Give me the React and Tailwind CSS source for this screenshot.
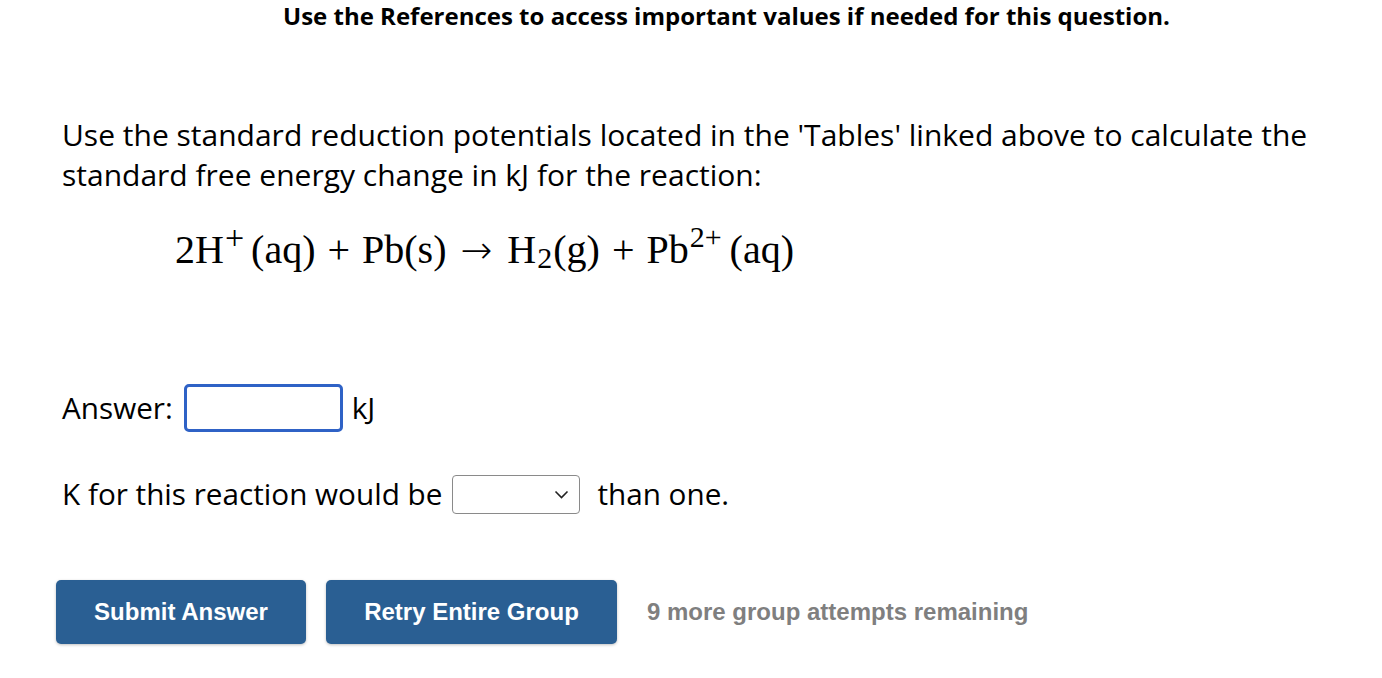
import React from 'react';

export default function App() {
  return (
    <div className="w-[1382px] h-[678px] bg-white text-black font-['Open_Sans',sans-serif] overflow-hidden">
      {/* Header note */}
      <div className="pl-[283px]">
        <p className="text-[24px] font-bold leading-[32px] whitespace-nowrap">
          Use the References to access important values if needed for this question.
        </p>
      </div>

      <div className="pl-[62px]">
        <p className="mt-[83px] text-[30px] leading-[40px] w-[1300px]">
          Use the standard reduction potentials located in the 'Tables' linked above to calculate the standard free energy change in kJ for the reaction:
        </p>

        {/* Equation */}
        <div className="mt-[33px] h-[44px] pl-[113px] flex items-center font-['Liberation_Serif','DejaVu_Serif',serif] text-[40px] leading-[44px] whitespace-nowrap">
          <span>2H</span>
          <span className="ml-[1px] relative -top-[12px] text-[34px] leading-none">+</span>
          <span className="ml-[7px]">(aq)</span>
          <span className="ml-[12px]">+</span>
          <span className="ml-[12px]">Pb(s)</span>
          <span className="ml-[14px] font-['DejaVu_Sans',sans-serif] font-extralight text-[38px]">→</span>
          <span className="ml-[15px]">H</span>
          <span className="ml-[1px] relative top-[8px] text-[30px] leading-none">2</span>
          <span className="ml-[1px]">(g)</span>
          <span className="ml-[12px]">+</span>
          <span className="ml-[12px]">Pb</span>
          <span className="ml-[1px] relative -top-[13px] text-[30px] leading-none">2+</span>
          <span className="ml-[8px]">(aq)</span>
        </div>

        {/* Answer */}
        <div className="mt-[112px] h-[48px] flex items-center text-[29.7px]">
          <span>Answer:</span>
          <div className="ml-[11px] w-[159px] h-[48px] border-[3px] border-[#2f62c6] rounded-[5px]" />
          <span className="ml-[9px]">kJ</span>
        </div>

        {/* K select */}
        <div className="mt-[43px] h-[39px] flex items-center text-[29.7px]">
          <span>K for this reaction would be</span>
          <div className="ml-[10px] w-[128px] h-[39px] border border-[#8a8a8a] rounded-[4px] flex items-center justify-end pr-[10px]">
            <svg width="15" height="9" viewBox="0 0 15 9" fill="none" stroke="#222" strokeWidth="1.6">
              <path d="M1.5 1.5 L7.5 7.5 L13.5 1.5" />
            </svg>
          </div>
          <span className="ml-[17px]">than one.</span>
        </div>
      </div>

      {/* Buttons */}
      <div className="pl-[56px] mt-[66px] flex items-center font-['Liberation_Sans',Arial,sans-serif] text-[24px] font-bold">
        <button className="w-[250px] h-[64px] bg-[#2a5f93] text-white rounded-[5px] shadow-[0_1px_3px_rgba(0,0,0,0.25)]">
          Submit Answer
        </button>
        <button className="ml-[20px] w-[291px] h-[64px] bg-[#2a5f93] text-white rounded-[5px] shadow-[0_1px_3px_rgba(0,0,0,0.25)]">
          Retry Entire Group
        </button>
        <span className="ml-[30px] text-[#7f7f7f]">9 more group attempts remaining</span>
      </div>
    </div>
  );
}
